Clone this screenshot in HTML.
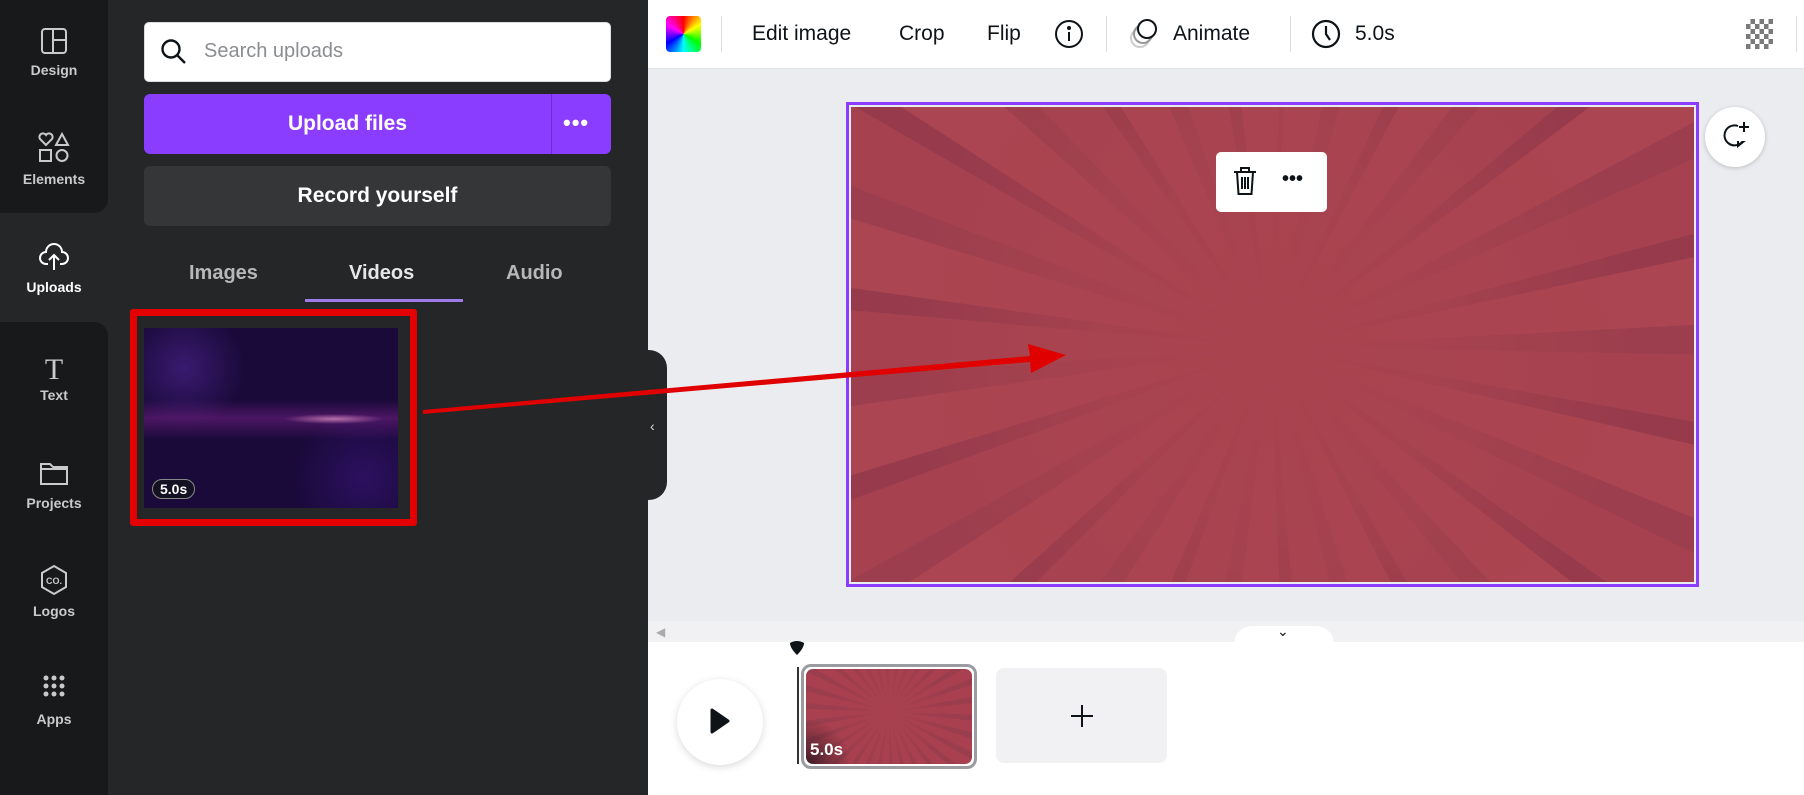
<!DOCTYPE html>
<html><head><meta charset="utf-8"><style>
*{box-sizing:border-box;margin:0;padding:0}
body{width:1804px;height:795px;overflow:hidden;position:relative;font-family:"Liberation Sans",sans-serif;background:#ebecf0}
.abs{position:absolute}
.rail{left:0;top:0;width:108px;height:795px;background:#252627}
.navlbl{position:absolute;left:0;width:108px;text-align:center;color:#c9cacc;font-size:14px;font-weight:bold}
.panel{left:108px;top:0;width:540px;height:795px;background:#252627}
.tab{position:absolute;top:260px;font-size:20px;font-weight:bold;color:#b6b7b9}
.tool{position:absolute;top:22px;font-size:21px;color:#0e1318}
</style></head><body>
<div class="abs rail">
  <div class="abs" style="left:0;top:0;width:108px;height:213px;background:#18191b;border-bottom-right-radius:14px"></div>
  <div class="abs" style="left:0;top:322px;width:108px;height:473px;background:#18191b;border-top-right-radius:14px"></div>
  <svg class="abs" style="left:40px;top:27px" width="28" height="28" viewBox="0 0 28 28" fill="none" stroke="#c9cacc" stroke-width="2"><rect x="2" y="2" width="24" height="24" rx="3"/><path d="M13 2v24M13 13h13"/></svg>
  <div class="navlbl" style="top:62px">Design</div>
  <svg class="abs" style="left:38px;top:132px" width="32" height="32" viewBox="0 0 32 32" fill="none" stroke="#c9cacc" stroke-width="2"><path d="M8 13 L2 7 A3 3 0 0 1 8 3 A3 3 0 0 1 14 7 Z"/><path d="M24 2 L30 13 L18 13 Z"/><rect x="2" y="18" width="11" height="11"/><circle cx="24" cy="23.5" r="5.5"/></svg>
  <div class="navlbl" style="top:171px">Elements</div>
  <svg class="abs" style="left:38px;top:240px" width="32" height="32" viewBox="0 0 32 32" fill="none" stroke="#fff" stroke-width="2"><path d="M10 24H8a6 6 0 0 1 0-12 8 8 0 0 1 16 0 6 6 0 0 1 0 12h-2"/><path d="M16 30V16M11 20l5-5 5 5"/></svg>
  <div class="navlbl" style="top:279px;color:#fff">Uploads</div>
  <div class="abs" style="left:41px;top:353px;font-size:30px;color:#c9cacc;font-family:'Liberation Serif',serif;width:26px;text-align:center">T</div>
  <div class="navlbl" style="top:387px">Text</div>
  <svg class="abs" style="left:39px;top:460px" width="30" height="26" viewBox="0 0 30 26" fill="none" stroke="#c9cacc" stroke-width="2"><path d="M2 4h9l3 3h14v17H2z M2 9h26"/></svg>
  <div class="navlbl" style="top:495px">Projects</div>
  <svg class="abs" style="left:38px;top:564px" width="32" height="32" viewBox="0 0 32 32" fill="none" stroke="#c9cacc" stroke-width="2"><path d="M16 2 L28 9 V23 L16 30 L4 23 V9 Z"/><text x="16" y="20" font-size="9" fill="#c9cacc" stroke="none" text-anchor="middle" font-family="Liberation Sans" font-weight="bold">CO.</text></svg>
  <div class="navlbl" style="top:603px">Logos</div>
  <svg class="abs" style="left:42px;top:674px" width="24" height="24" viewBox="0 0 24 24" fill="#c9cacc"><circle cx="4" cy="4" r="2.5"/><circle cx="12" cy="4" r="2.5"/><circle cx="20" cy="4" r="2.5"/><circle cx="4" cy="12" r="2.5"/><circle cx="12" cy="12" r="2.5"/><circle cx="20" cy="12" r="2.5"/><circle cx="4" cy="20" r="2.5"/><circle cx="12" cy="20" r="2.5"/><circle cx="20" cy="20" r="2.5"/></svg>
  <div class="navlbl" style="top:711px">Apps</div>
</div>
<div class="abs panel">
  <div class="abs" style="left:36px;top:22px;width:467px;height:60px;background:#fff;border-radius:5px;border:1px solid #ddd"></div>
  <svg class="abs" style="left:52px;top:38px" width="28" height="28" viewBox="0 0 28 28" fill="none" stroke="#0e1318" stroke-width="2.4"><circle cx="11" cy="11" r="8.5"/><path d="M17 17l8 8"/></svg>
  <div class="abs" style="left:96px;top:40px;font-size:20px;color:#8a8d91">Search uploads</div>
  <div class="abs" style="left:36px;top:94px;width:467px;height:60px;background:#8b3dff;border-radius:6px"></div>
  <div class="abs" style="left:443px;top:94px;width:1px;height:60px;background:#6a2fc4"></div>
  <div class="abs" style="left:36px;top:112px;width:407px;text-align:center;color:#fff;font-size:21px;font-weight:bold">Upload files</div>
  <div class="abs" style="left:455px;top:110px;color:#fff;font-size:22px;font-weight:bold;letter-spacing:1px">•••</div>
  <div class="abs" style="left:36px;top:166px;width:467px;height:60px;background:#353638;border-radius:6px"></div>
  <div class="abs" style="left:36px;top:184px;width:467px;text-align:center;color:#fff;font-size:21px;font-weight:bold">Record yourself</div>
  <div class="tab" style="left:81px;top:262px">Images</div>
  <div class="tab" style="left:241px;top:262px;color:#e5e6e8">Videos</div>
  <div class="tab" style="left:398px;top:262px">Audio</div>
  <div class="abs" style="left:197px;top:299px;width:158px;height:3px;background:#9d7be8"></div>
  <div class="abs" style="left:22px;top:309px;width:287px;height:217px;border:7px solid #e40000;border-radius:3px"></div>
  <div class="abs" style="left:36px;top:328px;width:254px;height:180px;background:radial-gradient(ellipse 50px 5px at 190px 91px,rgba(255,170,220,.6),transparent),linear-gradient(180deg,transparent 40%,rgba(150,40,160,.4) 50%,transparent 62%),radial-gradient(circle at 40px 40px,#3a1a70,transparent 60px),radial-gradient(circle at 220px 150px,#2c1060,transparent 70px),#1a0a3a"></div>
  <div class="abs" style="left:44px;top:479px;padding:1px 7px;background:rgba(20,20,30,.85);border:1px solid #888;border-radius:10px;color:#fff;font-size:14px;font-weight:bold">5.0s</div>
</div>
<div class="abs" style="left:640px;top:350px;width:27px;height:150px;background:#252627;border-radius:0 18px 18px 0"></div>
<div class="abs" style="left:650px;top:418px;color:#ddd;font-size:14px">‹</div>
<div class="abs" style="left:648px;top:0;width:1156px;height:69px;background:#fff;border-bottom:1px solid #e2e3e6"></div>
<div class="abs" style="left:666px;top:16px;width:35px;height:36px;border-radius:4px;background:conic-gradient(from 0deg,#f00,#ff0,#0f0,#0ff,#00f,#f0f,#f00)"></div>
<div class="abs" style="left:721px;top:16px;width:1px;height:36px;background:#ddd"></div>
<div class="tool" style="left:752px">Edit image</div>
<div class="tool" style="left:899px">Crop</div>
<div class="tool" style="left:987px">Flip</div>
<svg class="abs" style="left:1054px;top:19px" width="30" height="30" viewBox="0 0 30 30" fill="none" stroke="#0e1318" stroke-width="2"><circle cx="15" cy="15" r="13"/><path d="M15 13v9"/><circle cx="15" cy="9" r="1" fill="#0e1318"/></svg>
<div class="abs" style="left:1106px;top:16px;width:1px;height:36px;background:#ddd"></div>
<svg class="abs" style="left:1128px;top:16px" width="32" height="34" viewBox="0 0 32 34" fill="none" stroke-width="2"><circle cx="12" cy="22" r="9" stroke="#ccc"/><circle cx="15" cy="18" r="9" stroke="#999"/><circle cx="19" cy="13" r="9" stroke="#0e1318" fill="#fff"/></svg>
<div class="tool" style="left:1173px">Animate</div>
<div class="abs" style="left:1290px;top:16px;width:1px;height:36px;background:#ddd"></div>
<svg class="abs" style="left:1311px;top:19px" width="30" height="30" viewBox="0 0 30 30" fill="none" stroke="#0e1318" stroke-width="2.2"><circle cx="15" cy="15" r="13"/><path d="M15 7v8l4 6"/></svg>
<div class="tool" style="left:1355px">5.0s</div>
<div class="abs" style="left:1746px;top:19px;width:27px;height:30px;background:repeating-conic-gradient(#222 0 25%,#fff 0 50%) 0 0/9px 10px;opacity:.6"></div>
<div class="abs" style="left:1796px;top:16px;width:1px;height:36px;background:#ddd"></div>
<div class="abs" style="left:846px;top:102px;width:853px;height:485px;border:3px solid #8b3dff"></div>
<div class="abs" style="left:851px;top:107px;width:843px;height:475px;background:radial-gradient(circle at 420px 240px,#a9444f 0,rgba(169,68,79,.75) 180px,transparent 380px),repeating-conic-gradient(from 3deg at 420px 240px,#aa4551 0 9deg,#9c3e4e 9deg 13deg,#a64250 13deg 22deg,#963a4c 22deg 25deg)"></div>
<div class="abs" style="left:1216px;top:152px;width:111px;height:60px;background:#fff;border-radius:5px"></div>
<svg class="abs" style="left:1232px;top:166px" width="26" height="30" viewBox="0 0 26 30" fill="none" stroke="#0e1318" stroke-width="2"><path d="M2 6h22M9 6V2h8v4M5 6l1.5 22h13L21 6M10 11v12M13 11v12M16 11v12"/></svg>
<div class="abs" style="left:1282px;top:168px;font-size:20px;font-weight:bold;color:#0e1318">•••</div>
<div class="abs" style="left:1705px;top:107px;width:60px;height:60px;border-radius:50%;background:#fff;box-shadow:0 1px 5px rgba(0,0,0,.2)"></div>
<svg class="abs" style="left:1720px;top:120px" width="32" height="34" viewBox="0 0 32 34" fill="none" stroke="#0e1318" stroke-width="2"><path d="M18 6A10 10 0 1 0 22 22L23 22 18 26 V21"/><path d="M24 2v10M19 7h10"/></svg>
<svg class="abs" style="left:0;top:0" width="1804" height="795"><polygon points="423,410 1030,356 1028,344 1066,355 1031,373 1030,362 423,414" fill="#e00000"/></svg>
<div class="abs" style="left:648px;top:621px;width:1156px;height:22px;background:#f1f1f3;border-bottom:1px solid #ddd"></div>
<div class="abs" style="left:656px;top:625px;color:#aaa;font-size:12px">◀</div>
<div class="abs" style="left:648px;top:642px;width:1156px;height:153px;background:#fff"></div>
<div class="abs" style="left:1234px;top:626px;width:100px;height:18px;background:#fff;border-radius:18px 18px 0 0"></div>
<div class="abs" style="left:1277px;top:623px;font-size:14px;color:#0e1318">⌄</div>
<svg class="abs" style="left:788px;top:640px" width="18" height="16" viewBox="0 0 18 16"><path d="M2 3Q9 -1 16 3Q16 8 9 15Q2 8 2 3Z" fill="#0e1318"/></svg>
<div class="abs" style="left:797px;top:667px;width:2px;height:97px;background:#333"></div>
<div class="abs" style="left:677px;top:679px;width:86px;height:86px;border-radius:50%;background:#fff;box-shadow:0 2px 8px rgba(0,0,0,.15)"></div>
<svg class="abs" style="left:709px;top:707px" width="22" height="28" viewBox="0 0 22 28"><path d="M3 3L19 14L3 25Z" fill="#0e1318" stroke="#0e1318" stroke-width="3" stroke-linejoin="round"/></svg>
<div class="abs" style="left:801px;top:664px;width:176px;height:105px;border:3px solid #9a9ca2;border-radius:10px;overflow:hidden;background:#fff;padding:2px">
  <div style="width:100%;height:100%;border-radius:7px;background:radial-gradient(circle at 0 100%,rgba(40,20,30,.8),transparent 45px),radial-gradient(circle at 50% 45%,#a8404f,transparent 60px),repeating-conic-gradient(from 0deg at 50% 45%,#a8404f 0 8deg,#9a3d4d 8deg 12deg)"></div>
</div>
<div class="abs" style="left:810px;top:740px;color:#fff;font-size:17px;font-weight:bold">5.0s</div>
<div class="abs" style="left:996px;top:668px;width:171px;height:95px;background:#f1f1f3;border-radius:8px"></div>
<svg class="abs" style="left:1070px;top:704px" width="24" height="24" viewBox="0 0 24 24" stroke="#0e1318" stroke-width="2"><path d="M12 1v22M1 12h22"/></svg>
</body></html>
